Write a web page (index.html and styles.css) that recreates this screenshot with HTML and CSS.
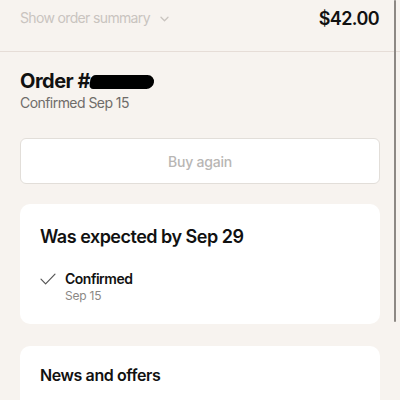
FILE: index.html
```html
<!DOCTYPE html>
<html lang="en">
<head>
<meta charset="utf-8">
<title>Order status</title>
<link rel="stylesheet" href="styles.css">
</head>
<body>
<div class="page">
  <header class="summary-bar">
    <button class="summary-toggle" type="button">
      <span>Show order summary</span>
      <svg class="chev" width="9" height="6" viewBox="0 0 9 6" aria-hidden="true"><path d="M1 1.2l3.5 3.5 3.5-3.5" fill="none" stroke="currentColor" stroke-width="1.3" stroke-linecap="round" stroke-linejoin="round"/></svg>
    </button>
    <div class="total">$42.00</div>
  </header>
  <main class="content">
    <section class="order-head">
      <h1 class="order-title">Order #<span class="redact" aria-label="redacted"></span></h1>
      <p class="order-sub">Confirmed Sep 15</p>
    </section>
    <button class="buy-again" type="button">Buy again</button>
    <section class="card">
      <h2 class="card-title">Was expected by Sep 29</h2>
      <div class="step">
        <svg class="check" width="16" height="12" viewBox="0 0 16 12" aria-hidden="true"><path d="M1 6.2l4.6 4.6L15 1.2" fill="none" stroke="currentColor" stroke-width="1.2" stroke-linecap="round" stroke-linejoin="round"/></svg>
        <div class="step-text">
          <div class="step-name">Confirmed</div>
          <div class="step-date">Sep 15</div>
        </div>
      </div>
    </section>
    <section class="card card-news">
      <h2 class="card-title small">News and offers</h2>
    </section>
  </main>
  <div class="scroll-indicator"></div>
</div>
</body>
</html>
```

FILE: styles.css
```css
* { box-sizing: border-box; }
html, body {
  margin: 0;
  padding: 0;
  background: #f7f3ef;
  font-family: Inter, "Noto Sans", "Liberation Sans", sans-serif;
  color: #111;
}
.page {
  position: relative;
  width: 400px;
  height: 400px;
  overflow: hidden;
}
.summary-bar {
  height: 52px;
  border-bottom: 1px solid #e6ddd7;
  display: flex;
  align-items: flex-start;
  justify-content: space-between;
  padding: 8px 21px 0 20px;
}
.summary-toggle {
  display: flex;
  align-items: center;
  gap: 10px;
  background: none;
  border: 0;
  padding: 0;
  margin-top: 1px;
  font: inherit;
  font-size: 14px;
  line-height: 18px;
  color: #c9c4bf;
  letter-spacing: -0.65px;
}
.chev { color: #c9c4bf; margin-top: 1px; }
.total {
  font-size: 18px;
  line-height: 22px;
  font-weight: 600;
  color: #111;
  letter-spacing: -0.6px;
}
.content {
  padding: 17px 20px 0 20px;
}
.order-title {
  margin: 0;
  font-size: 20px;
  line-height: 24px;
  font-weight: 700;
  letter-spacing: -0.5px;
  display: flex;
  align-items: center;
}
.redact {
  display: inline-block;
  width: 64px;
  height: 14px;
  background: #000;
  border-radius: 6px 9px 8px 5px;
  margin-left: 0;
  margin-top: 1px;
  transform: skewX(-8deg);
}
.order-sub {
  margin: 0;
  font-size: 14px;
  line-height: 20px;
  color: #6f6c69;
  letter-spacing: -0.55px;
}
.buy-again {
  display: block;
  width: 100%;
  height: 46px;
  margin-top: 25px;
  background: #fff;
  border: 1px solid #e2ded9;
  border-radius: 6px;
  font: inherit;
  font-size: 14px;
  font-weight: 500;
  color: #b8b6b4;
  letter-spacing: -0.2px;
}
.card {
  margin-top: 20px;
  background: #fff;
  border-radius: 10px;
  padding: 22px 20px 0 20px;
  height: 120px;
}
.card-title {
  margin: 0;
  font-size: 18px;
  line-height: 22px;
  font-weight: 600;
  letter-spacing: -0.5px;
  color: #111;
}
.card-title.small {
  font-size: 16px;
  line-height: 20px;
  letter-spacing: -0.4px;
}
.step {
  display: flex;
  align-items: flex-start;
  gap: 9px;
  margin-top: 22px;
}
.check { color: #555; margin-top: 3px; flex: none; }
.step-name {
  font-size: 14px;
  line-height: 18px;
  font-weight: 600;
  letter-spacing: -0.5px;
}
.step-date {
  font-size: 12px;
  line-height: 16px;
  color: #8b8885;
  margin-top: 0;
  letter-spacing: -0.2px;
}
.card-news {
  margin-top: 22px;
  padding-top: 19px;
  height: 80px;
}
.scroll-indicator {
  position: absolute;
  right: 4px;
  top: 0;
  width: 2px;
  height: 322px;
  background: #8d8884;
  border-radius: 1px;
}
```
